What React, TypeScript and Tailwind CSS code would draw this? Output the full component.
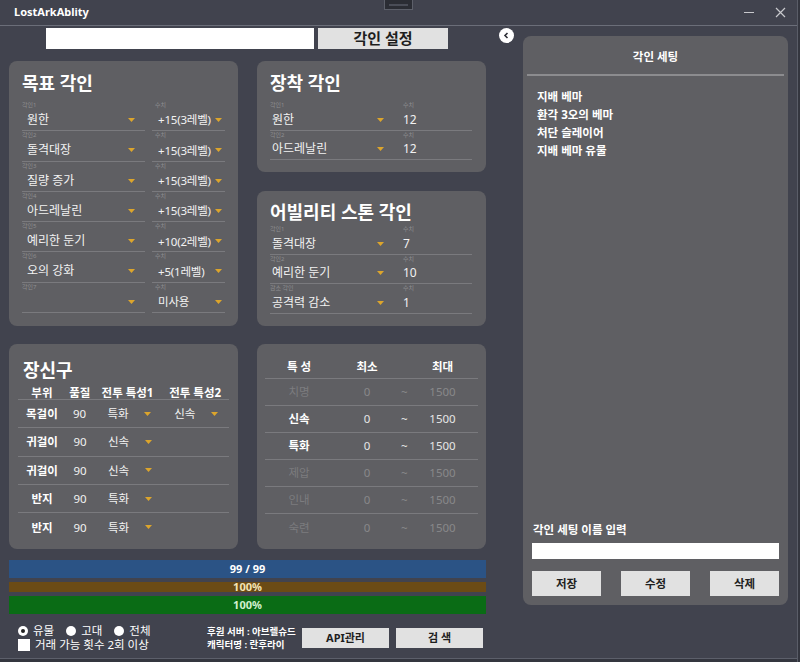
import React from 'react';

const font = { fontFamily: '"Noto Sans", "Noto Sans CJK KR", sans-serif' };

function Arrow() {
    return (
        <svg width="7" height="4" viewBox="0 0 7 4" className="shrink-0">
            <polygon points="0,0 7,0 3.5,4" fill="#dca52c" />
        </svg>
    );
}

const targets = [
    ['각인1', '원한', '+15(3레벨)'],
    ['각인2', '돌격대장', '+15(3레벨)'],
    ['각인3', '질량 증가', '+15(3레벨)'],
    ['각인4', '아드레날린', '+15(3레벨)'],
    ['각인5', '예리한 둔기', '+10(2레벨)'],
    ['각인6', '오의 강화', '+5(1레벨)'],
    ['각인7', '', '미사용'],
];

const equipped = [
    ['각인1', '원한', '12'],
    ['각인2', '아드레날린', '12'],
];

const stone = [
    ['각인1', '돌격대장', '7'],
    ['각인2', '예리한 둔기', '10'],
    ['감소 각인', '공격력 감소', '1'],
];

const accessories = [
    ['목걸이', '90', '특화', '신속'],
    ['귀걸이', '90', '신속', ''],
    ['귀걸이', '90', '신속', ''],
    ['반지', '90', '특화', ''],
    ['반지', '90', '특화', ''],
];

const stats = [
    ['치명', false],
    ['신속', true],
    ['특화', true],
    ['제압', false],
    ['인내', false],
    ['숙련', false],
] as const;

const presets = ['지배 베마', '환각 3오의 베마', '처단 슬레이어', '지배 베마 유물'];

function TargetRow({ label, name, value }: { label: string; name: string; value: string }) {
    return (
        <div className="flex gap-[7px] h-[30.3px]">
            <div className="w-[123px] flex flex-col border-b border-[#7a7a7e]">
                <div className="h-[9px] text-[6px] leading-[9px] text-[#8e8e90]">{label}</div>
                <div className="h-[20px] flex items-center justify-between pl-[5px] pr-[10px] text-[12px] text-[#f2f2f2]">
                    <span>{name}</span>
                    <Arrow />
                </div>
            </div>
            <div className="w-[73px] flex flex-col border-b border-[#7a7a7e]">
                <div className="h-[9px] pl-[3px] text-[6px] leading-[9px] text-[#8e8e90]">수치</div>
                <div className="h-[20px] flex items-center justify-between pl-[6px] pr-[3px] text-[11.5px] tracking-[-0.2px] text-[#f2f2f2]">
                    <span>{value}</span>
                    <Arrow />
                </div>
            </div>
        </div>
    );
}

function SimpleRow({ label, name, value }: { label: string; name: string; value: string }) {
    return (
        <div className="flex gap-[4px] h-[29.5px] border-b border-[#7a7a7e]">
            <div className="w-[126px] flex flex-col">
                <div className="h-[9px] text-[6px] leading-[9px] text-[#8e8e90]">{label}</div>
                <div className="h-[20px] flex items-center justify-between pl-[2px] pr-[12px] text-[12px] text-[#f2f2f2]">
                    <span>{name}</span>
                    <Arrow />
                </div>
            </div>
            <div className="flex-1 flex flex-col">
                <div className="h-[9px] pl-[3px] text-[6px] leading-[9px] text-[#8e8e90]">수치</div>
                <div className="h-[20px] flex items-center pl-[3px] text-[12px] text-[#f2f2f2]">{value}</div>
            </div>
        </div>
    );
}

export default function App() {
    return (
        <div className="w-[800px] h-[662px] bg-[#41434e] flex overflow-hidden select-none" style={font}>
            <div className="w-[797px] flex flex-col">
                {/* title bar */}
                <div className="relative h-[26px] border-b border-[#6b6e79] flex items-center pl-[14px] pr-[11px]">
                    <span className="text-[11px] font-bold text-white">LostArkAblity</span>
                    <div className="absolute left-[384px] top-0 w-[29px] h-[10px] bg-[#2b2d34] border border-t-0 border-[#5d606a] flex items-center justify-center">
                        <div className="w-[19px] h-[2px] bg-[#4a4d57]" />
                    </div>
                    <div className="ml-auto flex items-center gap-[21px]">
                        <div className="w-[10px] h-[1px] bg-[#c8c9cd]" />
                        <svg width="11" height="11" viewBox="0 0 11 11">
                            <path d="M1 1 L10 10 M10 1 L1 10" stroke="#c8c9cd" strokeWidth="1.2" />
                        </svg>
                    </div>
                </div>

                <div className="flex flex-1">
                    {/* left area */}
                    <div className="w-[523px] flex flex-col">
                        <div className="mt-[2px] h-[21px] flex items-start pl-[46px]">
                            <div className="w-[268px] h-[21px] bg-white" />
                            <div className="ml-[4px] w-[130px] h-[21px] bg-[#e1e1e1] flex items-center justify-center text-[15px] font-bold text-[#1e1e1e]">
                                각인 설정
                            </div>
                            <div className="ml-[51px] w-[15px] h-[15px] rounded-full bg-white flex items-center justify-center">
                                <svg width="7" height="7" viewBox="0 0 7 7">
                                    <path d="M4.5 1 L2 3.5 L4.5 6" stroke="#2b2d34" strokeWidth="1.6" fill="none" />
                                </svg>
                            </div>
                        </div>

                        <div className="mt-[12px] pl-[9px] flex gap-[19px]">
                            {/* column 1 */}
                            <div className="w-[229px] flex flex-col">
                                <div className="h-[265px] rounded-lg bg-[#5f5f63] pt-[10px] px-[13px]">
                                    <div className="h-[24px] leading-[24px] text-[18px] font-bold text-white">목표 각인</div>
                                    <div className="mt-[6px]">
                                        {targets.map(([l, n, v], i) => (
                                            <TargetRow key={i} label={l} name={n} value={v} />
                                        ))}
                                    </div>
                                </div>

                                <div className="mt-[18px] h-[205px] rounded-lg bg-[#5f5f63] pt-[15px] px-[9px]">
                                    <div className="h-[22px] leading-[22px] pl-[5px] text-[18px] font-bold text-white">장신구</div>
                                    <div className="mt-[1px] h-[18px] pt-[5px] flex items-center border-b border-[#7a7a7e] text-[11.5px] font-bold text-white">
                                        <div className="w-[48px] text-center">부위</div>
                                        <div className="w-[28px] text-center">품질</div>
                                        <div className="w-[68px] text-center">전투 특성1</div>
                                        <div className="w-[68px] text-center">전투 특성2</div>
                                    </div>
                                    {accessories.map(([part, q, s1, s2], i) => (
                                        <div
                                            key={i}
                                            className={`h-[28.3px] flex items-center text-[11.5px] text-[#f2f2f2] ${i < accessories.length - 1 ? 'border-b border-[#7a7a7e]' : ''}`}
                                        >
                                            <div className="w-[48px] text-center font-bold text-white">{part}</div>
                                            <div className="w-[28px] text-center">{q}</div>
                                            <div className="w-[68px] flex items-center justify-between pl-[14px] pr-[10px]">
                                                <span>{s1}</span>
                                                <Arrow />
                                            </div>
                                            {s2 && (
                                                <div className="w-[68px] flex items-center justify-between pl-[13px] pr-[11px]">
                                                    <span>{s2}</span>
                                                    <Arrow />
                                                </div>
                                            )}
                                        </div>
                                    ))}
                                </div>
                            </div>

                            {/* column 2 */}
                            <div className="w-[229px] flex flex-col">
                                <div className="h-[111px] rounded-lg bg-[#5f5f63] pt-[10px] pl-[13px] pr-[14px]">
                                    <div className="h-[24px] leading-[24px] text-[18px] font-bold text-white">장착 각인</div>
                                    <div className="mt-[6px]">
                                        {equipped.map(([l, n, v], i) => (
                                            <SimpleRow key={i} label={l} name={n} value={v} />
                                        ))}
                                    </div>
                                </div>

                                <div className="mt-[19px] h-[135px] rounded-lg bg-[#5f5f63] pt-[10px] pl-[13px] pr-[14px]">
                                    <div className="h-[22px] leading-[22px] text-[18px] font-bold text-white">어빌리티 스톤 각인</div>
                                    <div className="mt-[2px]">
                                        {stone.map(([l, n, v], i) => (
                                            <SimpleRow key={i} label={l} name={n} value={v} />
                                        ))}
                                    </div>
                                </div>

                                <div className="mt-[18px] h-[205px] rounded-lg bg-[#5f5f63] pt-[11px] px-[8px]">
                                    <div className="h-[24px] flex items-center border-b border-[#7a7a7e] text-[11.5px] font-bold text-white">
                                        <div className="w-[68px] text-center">특 성</div>
                                        <div className="w-[68px] text-center">최소</div>
                                        <div className="w-[6px]" />
                                        <div className="w-[71px] text-center">최대</div>
                                    </div>
                                    {stats.map(([name, on], i) => (
                                        <div
                                            key={name}
                                            className={`h-[27px] flex items-center text-[11.5px] ${i < stats.length - 1 ? 'border-b border-[#7a7a7e]' : ''} ${on ? 'text-[#e6e6e6]' : 'text-[#88888a]'}`}
                                        >
                                            <div className={`w-[68px] text-center ${on ? 'font-bold text-white' : 'text-[#7c7c7f]'}`}>{name}</div>
                                            <div className="w-[68px] text-center">0</div>
                                            <div className="w-[6px] text-center">~</div>
                                            <div className="w-[71px] text-center">1500</div>
                                        </div>
                                    ))}
                                </div>
                            </div>
                        </div>

                        {/* progress bars */}
                        <div className="mt-[11px] ml-[9px] w-[477px] flex flex-col text-[11px] font-bold">
                            <div className="h-[18px] bg-[#2b5385] flex items-center justify-center text-white">99 / 99</div>
                            <div className="mt-[4px] h-[10px] bg-[#6b4b15] flex items-center justify-center leading-[10px] text-[#f3e3b5]">100%</div>
                            <div className="mt-[4px] h-[18px] bg-[#0a6c15] flex items-center justify-center text-[#d2f0cf]">100%</div>
                        </div>

                        {/* bottom controls */}
                        <div className="mt-[10px] flex items-start pl-[18px]">
                            <div className="w-[189px] flex flex-col text-[11.5px] text-white">
                                <div className="h-[14px] flex items-center">
                                    <span className="w-[10px] h-[10px] rounded-full bg-white flex items-center justify-center">
                                        <span className="w-[4px] h-[4px] rounded-full bg-[#222]" />
                                    </span>
                                    <span className="ml-[5px]">유물</span>
                                    <span className="ml-[12px] w-[10px] h-[10px] rounded-full bg-white" />
                                    <span className="ml-[5px]">고대</span>
                                    <span className="ml-[12px] w-[10px] h-[10px] rounded-full bg-white" />
                                    <span className="ml-[5px]">전체</span>
                                </div>
                                <div className="h-[14px] flex items-center">
                                    <span className="w-[12px] h-[12px] bg-white" />
                                    <span className="ml-[5px]">거래 가능 횟수 2회 이상</span>
                                </div>
                            </div>
                            <div className="w-[95px] flex flex-col mt-[1px] text-[9.5px] font-bold leading-[13px] text-white">
                                <span>후원 서버 : 아브렐슈드</span>
                                <span>캐릭터명 : 란후라이</span>
                            </div>
                            <div className="mt-[4px] w-[87px] h-[20px] bg-[#e1e1e1] flex items-center justify-center text-[11px] font-bold text-[#1e1e1e]">
                                API관리
                            </div>
                            <div className="mt-[4px] ml-[7px] w-[87px] h-[20px] bg-[#e1e1e1] flex items-center justify-center text-[11px] font-bold text-[#1e1e1e]">
                                검 색
                            </div>
                        </div>
                    </div>

                    {/* right panel */}
                    <div className="pt-[10px]">
                        <div className="w-[265px] h-[569px] rounded-lg bg-[#5f5f63] flex flex-col pt-[10px] px-[4px] pb-[9px]">
                            <div className="h-[22px] leading-[22px] text-center text-[11.5px] font-bold text-white">각인 세팅</div>
                            <div className="mt-[6px] h-[2px] bg-[#8c8c8f]" />
                            <div className="mt-[12px] pl-[10px] flex flex-col text-[11.5px] font-bold leading-[18px] text-white">
                                {presets.map((p) => (
                                    <span key={p}>{p}</span>
                                ))}
                            </div>
                            <div className="flex-1" />
                            <div className="px-[5px]">
                                <div className="h-[16px] leading-[16px] pl-[1px] text-[11.5px] font-bold text-white">각인 세팅 이름 입력</div>
                                <div className="mt-[5px] h-[16px] bg-white" />
                                <div className="mt-[12px] flex justify-between">
                                    {['저장', '수정', '삭제'].map((b) => (
                                        <div
                                            key={b}
                                            className="w-[69px] h-[25px] bg-[#e1e1e1] flex items-center justify-center text-[11.5px] font-bold text-[#1e1e1e]"
                                        >
                                            {b}
                                        </div>
                                    ))}
                                </div>
                            </div>
                        </div>
                    </div>
                </div>

                <div className="h-[4px] border-t border-[#5c5f6a] bg-[#34363f]" />
            </div>
            <div className="w-[1px] h-full bg-[#5a5d68]" />
            <div className="flex-1 h-full bg-[#34363f]" />
        </div>
    );
}
